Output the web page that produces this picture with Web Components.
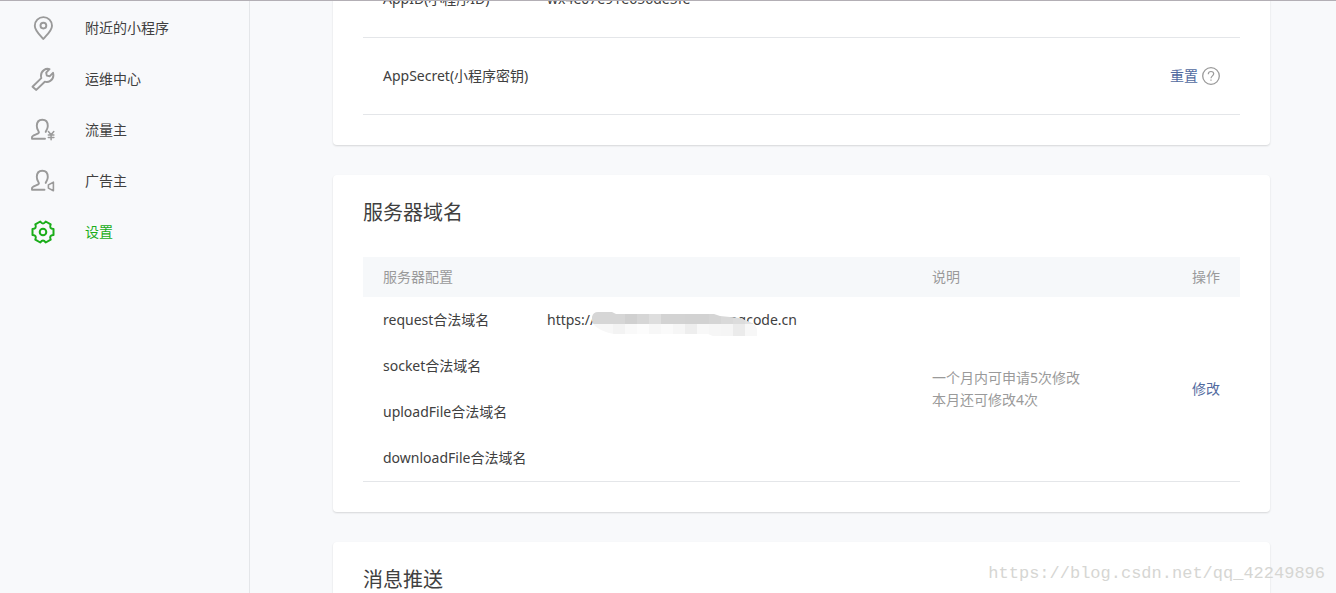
<!DOCTYPE html>
<html lang="zh-CN">
<head>
<meta charset="utf-8">
<title>设置</title>
<style>
  html, body {
    height: 100%;
    margin: 0;
  }
  body {
    font: 14px/22px "Noto Sans", "Noto Sans CJK SC", sans-serif;
    color: #404040;
    background: #f8f9fb;
    overflow: hidden;
  }
</style>
</head>
<body>
<console-page>
  <side-nav slot="nav">
    <nav-item icon="pin">附近的小程序</nav-item>
    <nav-item icon="wrench">运维中心</nav-item>
    <nav-item icon="publisher">流量主</nav-item>
    <nav-item icon="advertiser">广告主</nav-item>
    <nav-item icon="gear" active>设置</nav-item>
  </side-nav>
  <setting-card>
    <setting-row label="AppID(小程序ID)">wx4e07e91e656de5fe</setting-row>
    <setting-row label="AppSecret(小程序密钥)">
      <action-link slot="action">重置</action-link>
      <help-button slot="action"></help-button>
    </setting-row>
  </setting-card>
  <setting-card heading="服务器域名">
    <domain-table></domain-table>
  </setting-card>
  <setting-card heading="消息推送"></setting-card>
  <page-watermark slot="overlay">https://blog.csdn.net/qq_42249896</page-watermark>
</console-page>

<script>
const person = 'H1v-1.6c0-1.700 6.400-2.900 6.900-4.500.3-1.300-2.100-2.700-2.100-6.500 0-3.900 2.200-6.300 5.500-6.300s5.500 2.400 5.500 6.300c0 2.900-1.500 4.300-2.100 5.800';

const icons = {
  pin: '<path d="M12.300 23C8.900 18.800 3.800 14.600 3.800 9.700a8.600 8.600 0 0 1 17.200 0c0 4.900-5.200 9.100-8.700 13.300z"/><circle cx="12.400" cy="9.600" r="2.900"/>',
  wrench: '<path d="M1.500 19.800l8.800-8.700c-.8-3.200.2-6.300 2.600-8 1.800-1.300 4-1.500 5.600-1l-3.300 3.600.6 2.900 3 .6 3.200-3.400c.9 3.200-.3 6.500-2.700 8.100-1.800 1.200-3.800 1.300-5.500.8l-8.500 8.200z"/>',
  publisher: `<path d="M14 20.700${person}"/><path d="M17.400 13.500l2.700 3.300 2.700-3.300M20.100 16.800v5M17.300 17h5.600M17.300 19.500h5.600" stroke-width="1.500"/>`,
  advertiser: `<path d="M13.500 20.700${person}"/><path d="M22.400 13.200v8.600l-5-2.700v-3.200z" stroke-width="1.600"/>`,
  gear: '<path d="M22.500 14.900V9.100Q17.800 8.700 19.700 4.400L14.700 1.500Q12 5.400 9.300 1.500L4.300 4.400Q6.200 8.700 1.500 9.100V14.900Q6.200 15.300 4.300 19.600L9.300 22.500Q12 18.600 14.700 22.500L19.700 19.600Q17.800 15.300 22.500 14.900Z"/><circle cx="12" cy="12" r="3.300"/>',
};

const attach = (el, html) => {
  el.attachShadow({ mode: 'open' }).innerHTML = html;
};

class ConsolePage extends HTMLElement {
  constructor() {
    super();
    attach(this, `
      <style>
        :host {
          display: flex;
          height: 100vh;
          box-sizing: border-box;
          border-top: 1px solid #b3afb5;
          overflow: hidden;
        }
        main {
          flex: 1;
          min-width: 0;
          display: flex;
          flex-direction: column;
          gap: 30px;
          padding: 0 66px 0 83px;
          /* the page is scrolled part of the way into the first card */
          margin-top: -40px;
        }
      </style>
      <slot name="nav"></slot>
      <main><slot></slot></main>
      <slot name="overlay"></slot>
    `);
  }
}

class SideNav extends HTMLElement {
  constructor() {
    super();
    attach(this, `
      <style>
        :host {
          display: block;
          flex: 0 0 249px;
          padding-top: 1px;
          border-right: 1px solid #e4e6e9;
        }
      </style>
      <nav><slot></slot></nav>
    `);
  }
}

class NavItem extends HTMLElement {
  constructor() {
    super();
    attach(this, `
      <style>
        :host { display: block; }
        a {
          display: flex;
          align-items: center;
          gap: 30px;
          height: 51px;
          padding-left: 31px;
          color: inherit;
          text-decoration: none;
        }
        svg {
          width: 24px;
          height: 24px;
          fill: none;
          stroke: #9a9a9a;
          stroke-width: 1.9;
          stroke-linejoin: round;
          stroke-linecap: round;
        }
        :host([active]) a { color: #1aad19; }
        :host([active]) svg { stroke: #1aad19; stroke-width: 2; }
      </style>
      <a href="#"><svg viewBox="0 0 24 24" aria-hidden="true">${icons[this.getAttribute('icon')]}</svg><slot></slot></a>
    `);
  }
}

class SettingCard extends HTMLElement {
  constructor() {
    super();
    const heading = this.getAttribute('heading');
    attach(this, `
      <style>
        :host {
          display: block;
          flex: none;
          padding: 0 30px 30px;
          background: #fff;
          border-radius: 4px;
          box-shadow: 0 1px 2px rgba(0, 0, 0, .14);
        }
        h2 {
          margin: 0;
          padding: 23px 0 29px;
          font-size: 20px;
          line-height: 30px;
          font-weight: 400;
        }
      </style>
      ${heading ? `<h2>${heading}</h2>` : ''}
      <slot></slot>
    `);
  }
}

class SettingRow extends HTMLElement {
  constructor() {
    super();
    attach(this, `
      <style>
        :host {
          display: flex;
          align-items: center;
          height: 76px;
          padding: 0 20px;
          border-bottom: 1px solid #e4e6e9;
        }
        .label { flex: 0 0 164px; }
        .value { flex: 1; }
        .action {
          display: flex;
          align-items: center;
          gap: 4px;
        }
      </style>
      <div class="label">${this.getAttribute('label')}</div>
      <div class="value"><slot></slot></div>
      <div class="action"><slot name="action"></slot></div>
    `);
  }
}

class ActionLink extends HTMLElement {
  constructor() {
    super();
    attach(this, `
      <style>
        :host { display: inline-block; }
        a { color: #526b9f; text-decoration: none; }
      </style>
      <a href="#"><slot></slot></a>
    `);
  }
}

class HelpButton extends HTMLElement {
  constructor() {
    super();
    attach(this, `
      <style>
        :host { display: flex; }
        button {
          display: flex;
          padding: 0;
          border: 0;
          background: none;
        }
        svg { width: 18px; height: 18px; fill: none; stroke: #9a9a9a; }
      </style>
      <button type="button" aria-label="帮助">
        <svg viewBox="0 0 18 18">
          <circle cx="9" cy="9" r="8.300" stroke-width="1.300"/>
          <path d="M6.300 7.200C6.300 5.300 7.400 4.500 9 4.500s2.700.9 2.700 2.300c0 2-2.700 2.200-2.700 4.500M9 12.500v1.300" stroke-width="1.200"/>
        </svg>
      </button>
    `);
  }
}

class MaskedUrl extends HTMLElement {
  constructor() {
    super();
    const upper = ['#d6d6d6', '#d6d6d6', '#d0d0d0', '#d6d6d6', '#dedede', '#d3d3d3', '#d3d3d3', '#d2d2d2', '#d2d2d2', '#d5d5d5', '#d9d9d9', '#dcdcdc', '#e2e2e2'];
    const lower = ['#f7f7f7', '#f3f3f3', '#f9f9f9', '#fcfcfc', '#f7f7f7', '#fafafa', '#f6f6f6', '#eeeeee', '#f8f8f8', '#f6f6f6', '#f5f5f5', '#ebebeb', '#f7f7f7'];
    const cells = (colors, y, h) => colors
      .map((c, i) => `<rect x="${i ? i * 12 + 9 : 0}" y="${y}" width="${i ? 12 : 21}" height="${h}" fill="${c}"/>`)
      .join('');
    attach(this, `
      <style>
        :host {
          position: relative;
          display: flex;
          justify-content: space-between;
          width: 250px;
        }
        svg {
          position: absolute;
          left: 45px;
          top: 3px;
          width: 165px;
          height: 24px;
        }
      </style>
      <span>https://</span><span><slot></slot></span>
      <svg viewBox="0 0 165 24" shape-rendering="crispEdges" aria-hidden="true">
        <clipPath id="smear"><path d="M0 5Q1 0 6 0L20 0L24 2H122L128 4L148 6L160 11Q165 14 165 18V24H121L116 22H22Q10 20 3 14Q-1 10 0 5z"/></clipPath>
        <g clip-path="url(#smear)">${cells(upper, 0, 12)}${cells(lower, 12, 12)}</g>
      </svg>
    `);
  }
}

class DomainTable extends HTMLElement {
  constructor() {
    super();
    attach(this, `
      <style>
        :host { display: block; border-bottom: 1px solid #e4e6e9; }
        table {
          width: 100%;
          table-layout: fixed;
          border-collapse: collapse;
        }
        th, td {
          box-sizing: border-box;
          height: 46px;
          padding: 0 20px;
          text-align: left;
          font-weight: 400;
        }
        thead th {
          height: 40px;
          color: #9a9a9a;
          background: #f6f8fa;
        }
        tbody th { white-space: nowrap; padding-right: 0; }
        .label { width: 164px; }
        .note { width: 228px; }
        .action { width: 100px; }
        td.note { color: #9a9a9a; }
        th.action, td.action { text-align: right; }
      </style>
      <table>
        <colgroup><col class="label"><col><col class="note"><col class="action"></colgroup>
        <thead>
          <tr><th colspan="2">服务器配置</th><th class="note">说明</th><th class="action">操作</th></tr>
        </thead>
        <tbody>
          <tr>
            <th scope="row">request合法域名</th>
            <td><masked-url>ngcode.cn</masked-url></td>
            <td class="note" rowspan="4">一个月内可申请5次修改<br>本月还可修改4次</td>
            <td class="action" rowspan="4"><action-link>修改</action-link></td>
          </tr>
          <tr><th scope="row">socket合法域名</th><td></td></tr>
          <tr><th scope="row">uploadFile合法域名</th><td></td></tr>
          <tr><th scope="row">downloadFile合法域名</th><td></td></tr>
        </tbody>
      </table>
    `);
  }
}

class PageWatermark extends HTMLElement {
  constructor() {
    super();
    attach(this, `
      <style>
        :host {
          position: absolute;
          right: 11px;
          bottom: 7px;
          font: 17px/24px "Liberation Mono", monospace;
          color: #d6d6d3;
          pointer-events: none;
        }
      </style>
      <slot></slot>
    `);
  }
}

customElements.define('console-page', ConsolePage);
customElements.define('side-nav', SideNav);
customElements.define('nav-item', NavItem);
customElements.define('setting-card', SettingCard);
customElements.define('setting-row', SettingRow);
customElements.define('action-link', ActionLink);
customElements.define('help-button', HelpButton);
customElements.define('masked-url', MaskedUrl);
customElements.define('domain-table', DomainTable);
customElements.define('page-watermark', PageWatermark);
</script>
</body>
</html>
